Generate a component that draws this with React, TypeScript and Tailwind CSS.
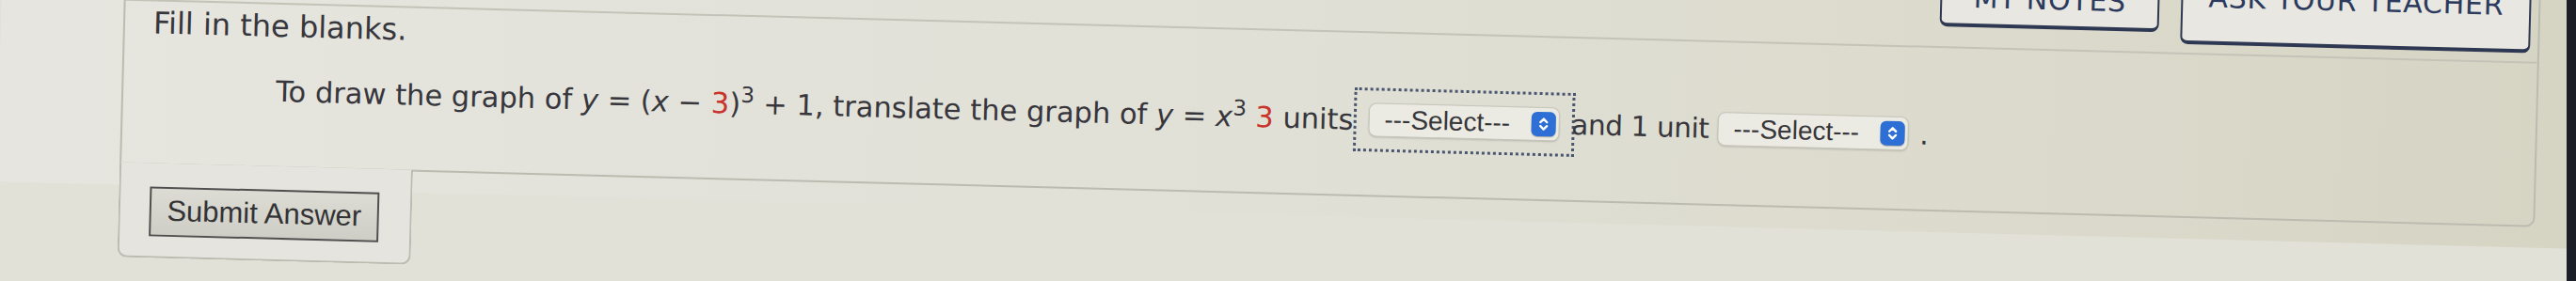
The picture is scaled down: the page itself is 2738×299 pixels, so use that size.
import React from 'react';

const Stepper: React.FC = () => (
  <span className="flex h-[26px] w-[26px] items-center justify-center rounded-[6px] bg-[#2d6fd4] shadow-[0_1px_1px_rgba(0,0,0,0.25)]">
    <svg width="16" height="20" viewBox="0 0 16 20" fill="none" stroke="#ffffff" strokeWidth="2.4" strokeLinecap="round" strokeLinejoin="round">
      <path d="M4.5 8 L8 4.5 L11.5 8" />
      <path d="M4.5 12 L8 15.5 L11.5 12" />
    </svg>
  </span>
);

const SelectBox: React.FC = () => (
  <span className="flex h-[36px] w-[203px] shrink-0 items-center justify-between rounded-[8px] border border-[#c6c5ba] bg-[#ebeae3] pl-[16px] pr-[3px] font-['Liberation_Sans',Arial,sans-serif] text-[28px] leading-none text-[#36363a] shadow-[0_1px_2px_rgba(0,0,0,0.15)]">
    <span>---Select---</span>
    <Stepper />
  </span>
);

export default function App() {
  return (
    <div className="relative h-[299px] w-[2738px] overflow-hidden bg-[#e2e1d8]">
      {/* photographed screen, slightly tilted */}
      <div className="h-[299px] w-[2738px] origin-center rotate-[1.5deg] bg-linear-to-r from-[#e6e5df] via-[#e1e0d6] to-[#d6d5c4] font-['DejaVu_Sans',Verdana,sans-serif] text-[#36363c]">
        <div className="ml-[130px] mt-[-70px] w-[2568px]">
          {/* question box */}
          <div className="rounded-t-[10px] rounded-br-[10px] border-2 border-[#bcbbb0]">
            {/* header with buttons */}
            <div className="flex h-[101px] items-end justify-end gap-[23px] border-b-2 border-[#c4c3b8] pb-[21px] pr-[8px]">
              <button className="flex h-[62px] w-[233px] items-center justify-center rounded-[8px] border-2 border-b-[4px] border-[#2f3852] bg-[#e8e7e1] text-[30px] tracking-wide text-[#2c3a5e]">
                MY NOTES
              </button>
              <button className="-mb-[12px] flex h-[74px] w-[372px] items-start justify-center rounded-[8px] border-2 border-b-[4px] border-[#2f3852] bg-[#e8e7e1] pt-[7px] text-[30px] leading-none tracking-wide text-[#2c3a5e]">
                ASK YOUR TEACHER
              </button>
            </div>

            {/* body */}
            <div className="pb-[46px] pl-[30px] pt-[4px]">
              <p className="text-[32px] leading-[38px]">Fill in the blanks.</p>

              <div className="ml-[132px] mt-[16px] flex h-[68px] items-center whitespace-pre text-[30.5px] leading-[37px]">
                <span>
                  To draw the graph of <i>y</i> = (<i>x</i> − <span className="text-[#c8342c]">3</span>)<sup>3</sup> + 1, translate the graph of <i>y</i> = <i>x</i><sup>3</sup>{' '}
                  <span className="text-[#c8342c]">3</span> units
                </span>
                <span className="flex border-[3px] border-dotted border-[#4a5670] p-[13px]">
                  <SelectBox />
                </span>
                <span className="-ml-[3px] text-[29.5px] tracking-[-0.4px]">and 1 unit </span>
                <SelectBox />
                <span className="ml-[12px]">.</span>
              </div>
            </div>
          </div>

          {/* submit tab */}
          <div className="-mt-[2px] flex h-[101px] w-[312px] rounded-b-[10px] border-x-2 border-b-2 border-[#bcbbb0] bg-[#e5e4de] pl-[31px] pt-[25px]">
            <button className="flex h-[53px] w-[244px] items-center justify-center border-2 border-[#4f4f4f] bg-linear-to-b from-[#dddcd4] to-[#cfcec6] font-['Liberation_Sans',Arial,sans-serif] text-[31px] text-[#333336]">
              Submit Answer
            </button>
          </div>
        </div>
      </div>

      {/* monitor bezel */}
      <div className="absolute bottom-0 right-0 top-0 w-[10px] bg-[#1c1e27]" />
    </div>
  );
}
